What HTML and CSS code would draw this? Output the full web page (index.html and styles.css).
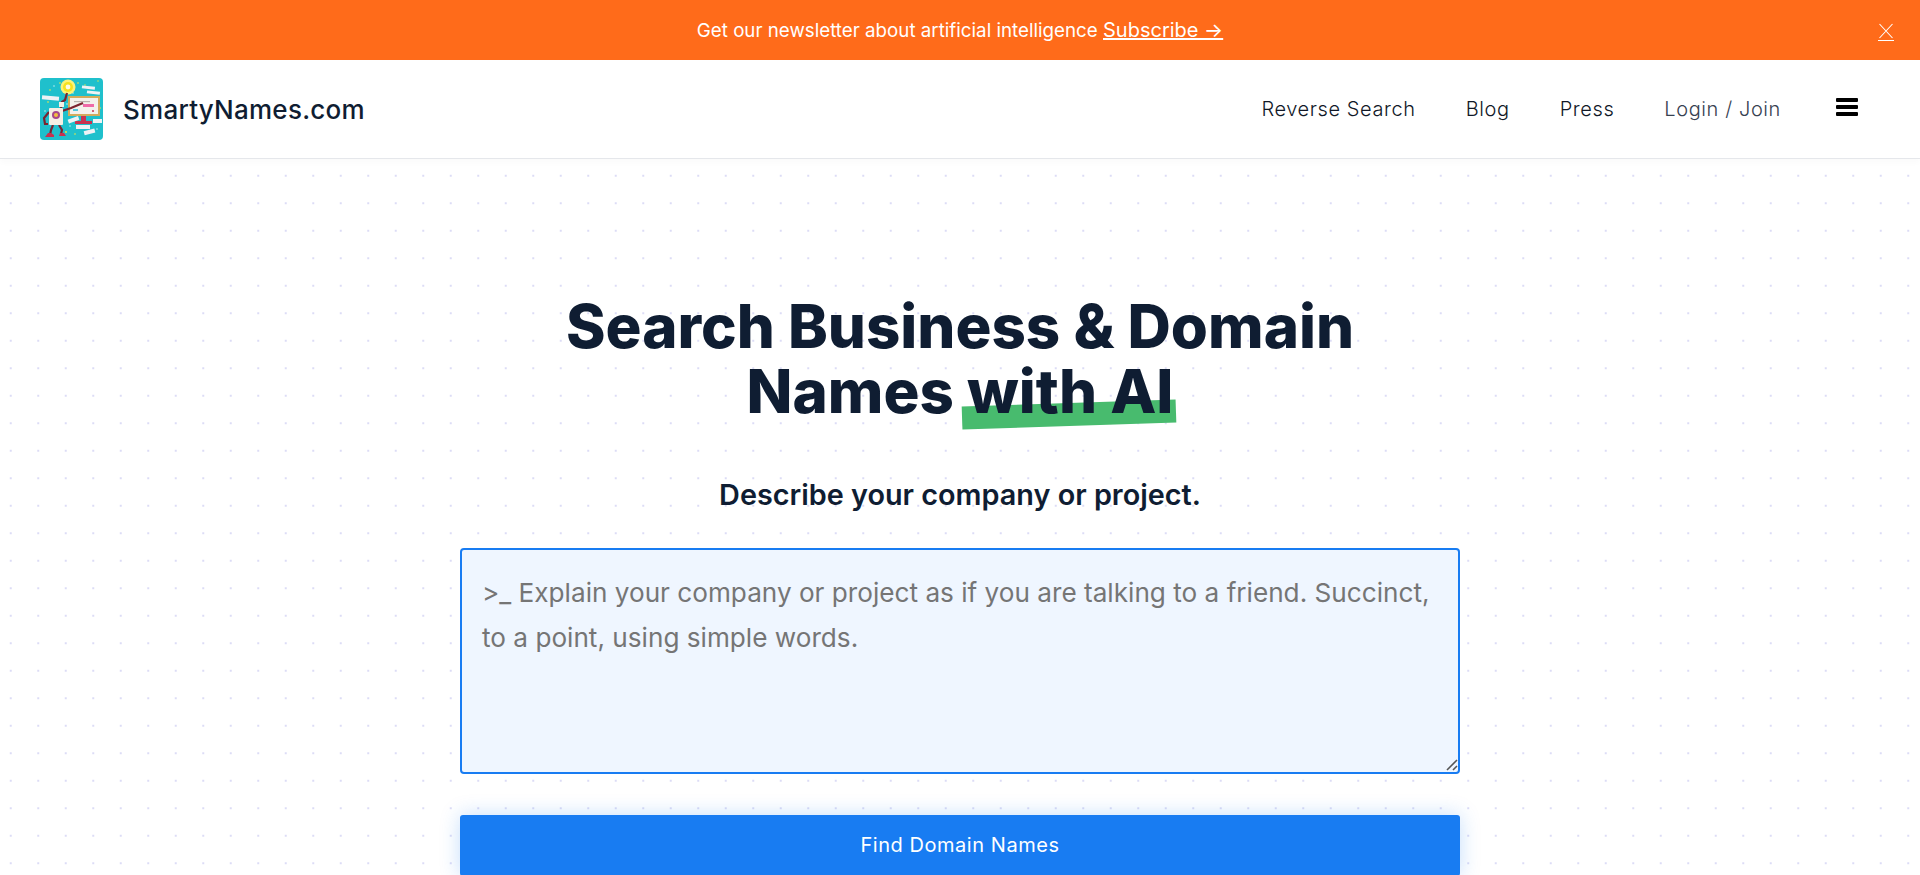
FILE: index.html
```html
<!DOCTYPE html>
<html lang="en">
<head>
    <meta charset="UTF-8">
    <meta name="viewport" content="width=device-width, initial-scale=1.0">
    <title>SmartyNames.com</title>
    <link rel="stylesheet" href="styles.css">
</head>
<body>
    <div class="banner">
        <p class="banner-text">Get our newsletter about artificial intelligence <a href="#">Subscribe →</a></p>
        <a class="banner-close" href="#">
            <svg width="16" height="16" viewBox="0 0 16 16"><path d="M1.5 1l13 14M14.5 1l-13 14" fill="none" stroke="#fff" stroke-width="1.1"/></svg>
        </a>
    </div>

    <header class="nav">
        <a class="brand" href="#">
            <!-- logo: robot pointing at a screen -->
            <svg class="brand-logo" width="63" height="62" viewBox="0 0 63 62">
                <rect width="63" height="62" rx="4" fill="#1fc0cc"/>
                <g fill="#f7ea3a">
                    <circle cx="10" cy="12" r=".8"/><circle cx="20" cy="5" r=".8"/><circle cx="38" cy="5" r=".8"/>
                    <circle cx="45" cy="7" r=".7"/><circle cx="58" cy="3" r=".7"/><circle cx="8" cy="24" r=".8"/>
                    <circle cx="26" cy="54" r=".9"/><circle cx="35" cy="56" r=".8"/><circle cx="60" cy="30" r=".8"/>
                </g>
                <g fill="#dff6f8">
                    <circle cx="14" cy="8" r=".7"/><circle cx="33" cy="15" r=".7"/><circle cx="5" cy="33" r=".7"/>
                    <circle cx="27" cy="26" r=".7"/><circle cx="57" cy="51" r=".7"/><circle cx="30" cy="48" r=".7"/>
                </g>
                <circle cx="28" cy="9" r="7.5" fill="#fbf27a"/>
                <circle cx="28" cy="9" r="5" fill="#f5e21f"/>
                <circle cx="28" cy="9" r="2.4" fill="#fdfbe6"/>
                <rect x="28" y="18" width="32" height="20" fill="#d3ab5c"/>
                <rect x="30" y="20" width="28" height="16" fill="#f4f1ec"/>
                <rect x="43" y="26" width="11" height="3" fill="#ef6aa8"/>
                <rect x="34" y="23" width="16" height="1.2" fill="#b9b2ad"/>
                <rect x="33" y="31" width="5" height="2" fill="#58c6dc"/>
                <circle cx="53" cy="33" r="1" fill="#c8324f"/>
                <path d="M41 38h5v5h6v3H35v-3h6z" fill="#c8324f"/>
                <g fill="#eef2f5">
                    <rect x="2" y="18" width="17" height="4" transform="rotate(5 10 20)"/>
                    <rect x="42" y="8" width="13" height="3" transform="rotate(6 48 9)"/>
                    <rect x="47" y="13" width="13" height="3" transform="rotate(6 53 14)"/>
                    <rect x="28" y="40" width="11" height="4" transform="rotate(-20 33 42)"/>
                    <rect x="36" y="47" width="14" height="4"/>
                    <rect x="53" y="41" width="9" height="4"/>
                    <rect x="44" y="52" width="11" height="4" transform="rotate(-15 49 54)"/>
                </g>
                <path d="M27 15l-2 7-3 2-1 6M43 25l-12 5-9 3M9 34l-5 6 1 6 3 0M13 47l-2 5-1 5M19 47l3 5-1 4" fill="none" stroke="#7b2430" stroke-width="2.2"/>
                <rect x="19" y="24" width="5" height="5" fill="#f6efe4"/>
                <rect x="9" y="30" width="14" height="17" rx="1" fill="#f6efe4"/>
                <circle cx="16" cy="37" r="4" fill="#a8488a"/>
                <circle cx="16" cy="37" r="2" fill="#f2c13c"/>
                <path d="M5 59h9v-2l-3-2H8zM19 58h7l-2-3h-4z" fill="#c8324f"/>
            </svg>
            <span class="brand-name">SmartyNames.com</span>
        </a>
        <nav class="nav-links">
            <a href="#">Reverse Search</a>
            <a href="#">Blog</a>
            <a href="#">Press</a>
            <a class="login" href="#">Login / Join</a>
            <button class="menu-button" aria-label="Menu"><span></span><span></span><span></span></button>
        </nav>
    </header>

    <main class="hero">
        <h1>Search Business &amp; Domain<br>Names <span class="highlight">with AI</span></h1>
        <h2>Describe your company or project.</h2>
        <form class="search-form">
            <textarea placeholder="&gt;_ Explain your company or project as if you are talking to a friend. Succinct, to a point, using simple words."></textarea>
            <button type="button" class="find-button">Find Domain Names</button>
        </form>
    </main>
</body>
</html>
```

FILE: styles.css
```css
* {
    box-sizing: border-box;
}

html, body {
    height: 875px;
    overflow: hidden;
}

body {
    margin: 0;
    font-family: Inter, "Liberation Sans", sans-serif;
    background-color: #fff;
    color: #0f1d32;
}

a {
    color: inherit;
    text-decoration: none;
}

.banner {
    position: relative;
    display: flex;
    align-items: center;
    justify-content: center;
    height: 60px;
    background-color: #ff6b1a;
    color: #fff;
}

.banner-text {
    margin: 0;
    font-size: 18.75px;
}

.banner-text a {
    font-size: 20px;
    text-decoration: underline;
}

.banner-close {
    position: absolute;
    right: 26px;
    top: 23px;
    height: 18px;
    border-bottom: 1px solid #fff;
    line-height: 0;
}

.nav {
    position: relative;
    display: flex;
    align-items: center;
    justify-content: space-between;
    height: 99px;
    padding: 0 62px 0 40px;
    border-bottom: 1px solid #e5e7eb;
    background-color: #fff;
    box-shadow: 0 4px 6px rgba(0, 0, 0, 0.02);
}

.brand {
    display: flex;
    align-items: center;
    gap: 20px;
}

.brand-name {
    font-size: 26px;
    font-weight: 500;
    letter-spacing: 0.25px;
}

.nav-links {
    display: flex;
    align-items: center;
    gap: 50px;
    font-size: 20px;
    font-weight: 300;
    letter-spacing: 0.6px;
    color: #111827;
}

.nav-links .login {
    color: #374151;
    margin-right: 5px;
}

.menu-button {
    display: flex;
    flex-direction: column;
    gap: 3px;
    width: 22px;
    padding: 0;
    border: none;
    background: none;
    margin-bottom: 5px;
}

.menu-button span {
    display: block;
    height: 4px;
    background-color: #000;
    border-radius: 1px;
}

.hero {
    height: 716px;
    padding-top: 135px;
    text-align: center;
    background-image: radial-gradient(circle, #dcdcf6 0.7px, transparent 1px);
    background-size: 27.5px 27.5px;
    background-position: -3px 3px;
}

h1 {
    margin: 0;
    font-size: 60px;
    font-weight: 800;
    line-height: 65px;
}

.highlight {
    position: relative;
    z-index: 0;
    display: inline-block;
}

.highlight::after {
    content: "";
    position: absolute;
    z-index: -1;
    left: -5px;
    right: -3px;
    bottom: -2px;
    height: 23px;
    background-color: #48bb6e;
    transform: rotate(-1.9deg);
}

h2 {
    margin: 51px 0 0;
    font-size: 28.8px;
    font-weight: 600;
    line-height: 40px;
}

.search-form {
    width: 1000px;
    margin: 33px auto 0;
}

textarea {
    display: block;
    width: 100%;
    height: 226px;
    padding: 20px 20px 18px;
    border: 2px solid #187cf2;
    border-radius: 4px;
    background-color: #eff6ff;
    font-family: inherit;
    font-size: 26.16px;
    line-height: 45px;
    color: #333;
    outline: none;
}

textarea::placeholder {
    color: #757575;
    opacity: 1;
}

textarea::-webkit-resizer {
    background: url("data:image/svg+xml,%3Csvg xmlns='http://www.w3.org/2000/svg' width='15' height='15'%3E%3Cpath d='M14 3L4 13M14 9l-4 4' stroke='%23555' stroke-width='1.6' fill='none'/%3E%3C/svg%3E") no-repeat;
}

.find-button {
    display: block;
    width: 100%;
    height: 61px;
    margin-top: 41px;
    padding: 0 0 2px;
    border: none;
    border-radius: 3px;
    background-color: #187cf2;
    color: #fff;
    font-family: inherit;
    font-size: 20px;
    font-weight: 400;
    letter-spacing: 0.55px;
    box-shadow: 0 0 20px rgba(24, 124, 242, 0.25);
}
```
